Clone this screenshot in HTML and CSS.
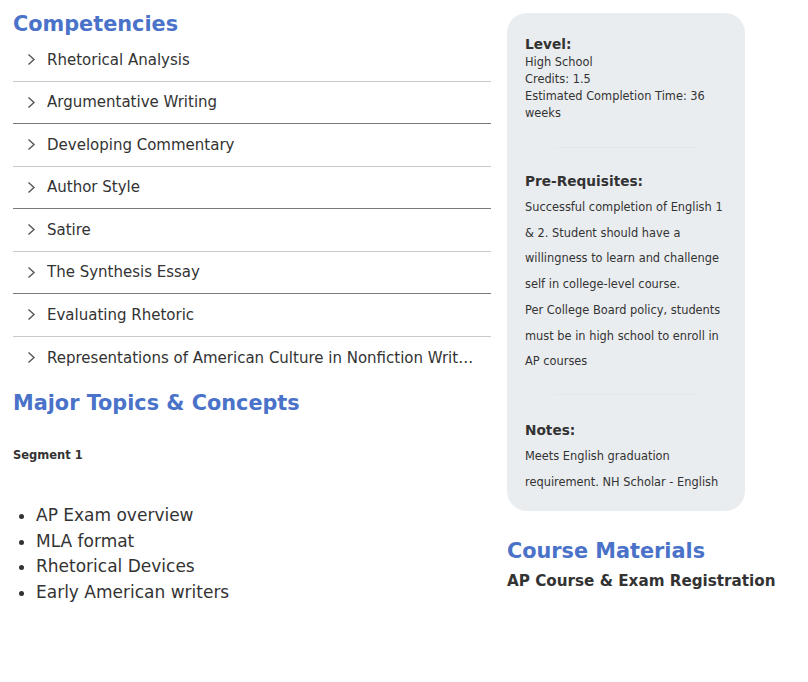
FILE: index.html
```html
<!DOCTYPE html>
<html>
<head>
<meta charset="utf-8">
<link rel="stylesheet" href="styles.css">
</head>
<body>
<div class="page">
  <main class="main">
    <h2 class="title">Competencies</h2>
    <ul class="comp-list">
      <li class="comp"><span class="chev"><svg width="9" height="13" viewBox="0 0 9 13"><path d="M1.5 1.5 L7 6.5 L1.5 11.5" fill="none" stroke="#555" stroke-width="1.4"/></svg></span><span class="comp-text">Rhetorical Analysis</span></li>
      <li class="comp"><span class="chev"><svg width="9" height="13" viewBox="0 0 9 13"><path d="M1.5 1.5 L7 6.5 L1.5 11.5" fill="none" stroke="#555" stroke-width="1.4"/></svg></span><span class="comp-text">Argumentative Writing</span></li>
      <li class="comp"><span class="chev"><svg width="9" height="13" viewBox="0 0 9 13"><path d="M1.5 1.5 L7 6.5 L1.5 11.5" fill="none" stroke="#555" stroke-width="1.4"/></svg></span><span class="comp-text">Developing Commentary</span></li>
      <li class="comp"><span class="chev"><svg width="9" height="13" viewBox="0 0 9 13"><path d="M1.5 1.5 L7 6.5 L1.5 11.5" fill="none" stroke="#555" stroke-width="1.4"/></svg></span><span class="comp-text">Author Style</span></li>
      <li class="comp"><span class="chev"><svg width="9" height="13" viewBox="0 0 9 13"><path d="M1.5 1.5 L7 6.5 L1.5 11.5" fill="none" stroke="#555" stroke-width="1.4"/></svg></span><span class="comp-text">Satire</span></li>
      <li class="comp"><span class="chev"><svg width="9" height="13" viewBox="0 0 9 13"><path d="M1.5 1.5 L7 6.5 L1.5 11.5" fill="none" stroke="#555" stroke-width="1.4"/></svg></span><span class="comp-text">The Synthesis Essay</span></li>
      <li class="comp"><span class="chev"><svg width="9" height="13" viewBox="0 0 9 13"><path d="M1.5 1.5 L7 6.5 L1.5 11.5" fill="none" stroke="#555" stroke-width="1.4"/></svg></span><span class="comp-text">Evaluating Rhetoric</span></li>
      <li class="comp"><span class="chev"><svg width="9" height="13" viewBox="0 0 9 13"><path d="M1.5 1.5 L7 6.5 L1.5 11.5" fill="none" stroke="#555" stroke-width="1.4"/></svg></span><span class="comp-text">Representations of American Culture in Nonfiction Writing</span></li>
    </ul>
    <h2 class="title title-topics">Major Topics &amp; Concepts</h2>
    <p class="segment">Segment 1</p>
    <ul class="topics">
      <li>AP Exam overview</li>
      <li>MLA format</li>
      <li>Rhetorical Devices</li>
      <li>Early American writers</li>
    </ul>
  </main>
  <aside class="side">
    <div class="card">
      <section class="card-sec">
        <h3 class="card-h">Level:</h3>
        <p class="card-info">High School<br>Credits: 1.5<br>Estimated Completion Time: 36 weeks</p>
      </section>
      <hr class="card-rule rule-1">
      <section class="card-sec">
        <h3 class="card-h">Pre-Requisites:</h3>
        <p class="card-text">Successful completion of English 1 &amp; 2. Student should have a willingness to learn and challenge self in college-level course.<br>Per College Board policy, students must be in high school to enroll in AP courses</p>
      </section>
      <hr class="card-rule rule-2">
      <section class="card-sec">
        <h3 class="card-h">Notes:</h3>
        <p class="card-text">Meets English graduation requirement. NH Scholar - English</p>
      </section>
    </div>
    <h2 class="title title-materials">Course Materials</h2>
    <p class="material">AP Course &amp; Exam Registration</p>
  </aside>
</div>
</body>
</html>
```
FILE: styles.css
```css
* { box-sizing: border-box; }
html, body { margin: 0; padding: 0; background: #fff; }
body {
  font-family: "DejaVu Sans", "Noto Sans", sans-serif;
  color: #333;
  width: 808px;
  height: 682px;
  overflow: hidden;
}
.page {
  display: flex;
  gap: 16px;
  padding: 0 0 0 13px;
  align-items: flex-start;
}
.main { width: 478px; flex: none; }
.side { width: 238px; flex: none; padding-top: 13px; }

.title {
  margin: 0;
  color: #4a72c9;
  font-size: 20.8px;
  font-weight: 700;
  line-height: 30px;
}
.main > .title:first-child { padding-top: 9px; }

.comp-list { list-style: none; margin: 0; padding: 0; }
.comp {
  display: flex;
  align-items: center;
  height: 42.5px;
  padding: 0 14px;
  border-bottom: 1px solid #c9c9c9;
  font-size: 15px;
  color: #333;
  white-space: nowrap;
}
.comp:nth-child(even) { border-bottom-color: #7a7a7a; }
.comp:last-child { border-bottom: none; }
.chev { display: flex; width: 20px; flex: none; }
.comp-text { overflow: hidden; text-overflow: ellipsis; }

.title-topics { margin-top: 9px; }
.segment {
  margin: 29px 0 0;
  font-size: 11.5px;
  line-height: 16px;
  font-weight: 700;
  color: #333;
}
.topics {
  margin: 40px 0 0;
  padding-left: 23px;
  font-size: 17px;
  line-height: 25.7px;
  color: #333;
}

.card {
  background: #eaedf0;
  border-radius: 20px;
  padding: 21px 18px 16px 18px;
}
.card-h {
  margin: 0;
  font-size: 13.7px;
  font-weight: 700;
  line-height: 20px;
  color: #333;
}
.card-info {
  margin: 0;
  font-size: 11.4px;
  line-height: 17px;
}
.card-text {
  margin: 4px 0 0;
  font-size: 11.4px;
  line-height: 25.7px;
}
.card-rule {
  border: none;
  border-top: 1px solid #e3e6ea;
  margin: 0 30px;
}
.rule-1 { margin-top: 25px; margin-bottom: 23px; }
.rule-2 { margin-top: 19px; margin-bottom: 25px; }

.title-materials { margin-top: 25px; }
.material {
  margin: 0;
  font-size: 15.2px;
  line-height: 30px;
  font-weight: 700;
  white-space: nowrap;
  color: #333;
}
```
